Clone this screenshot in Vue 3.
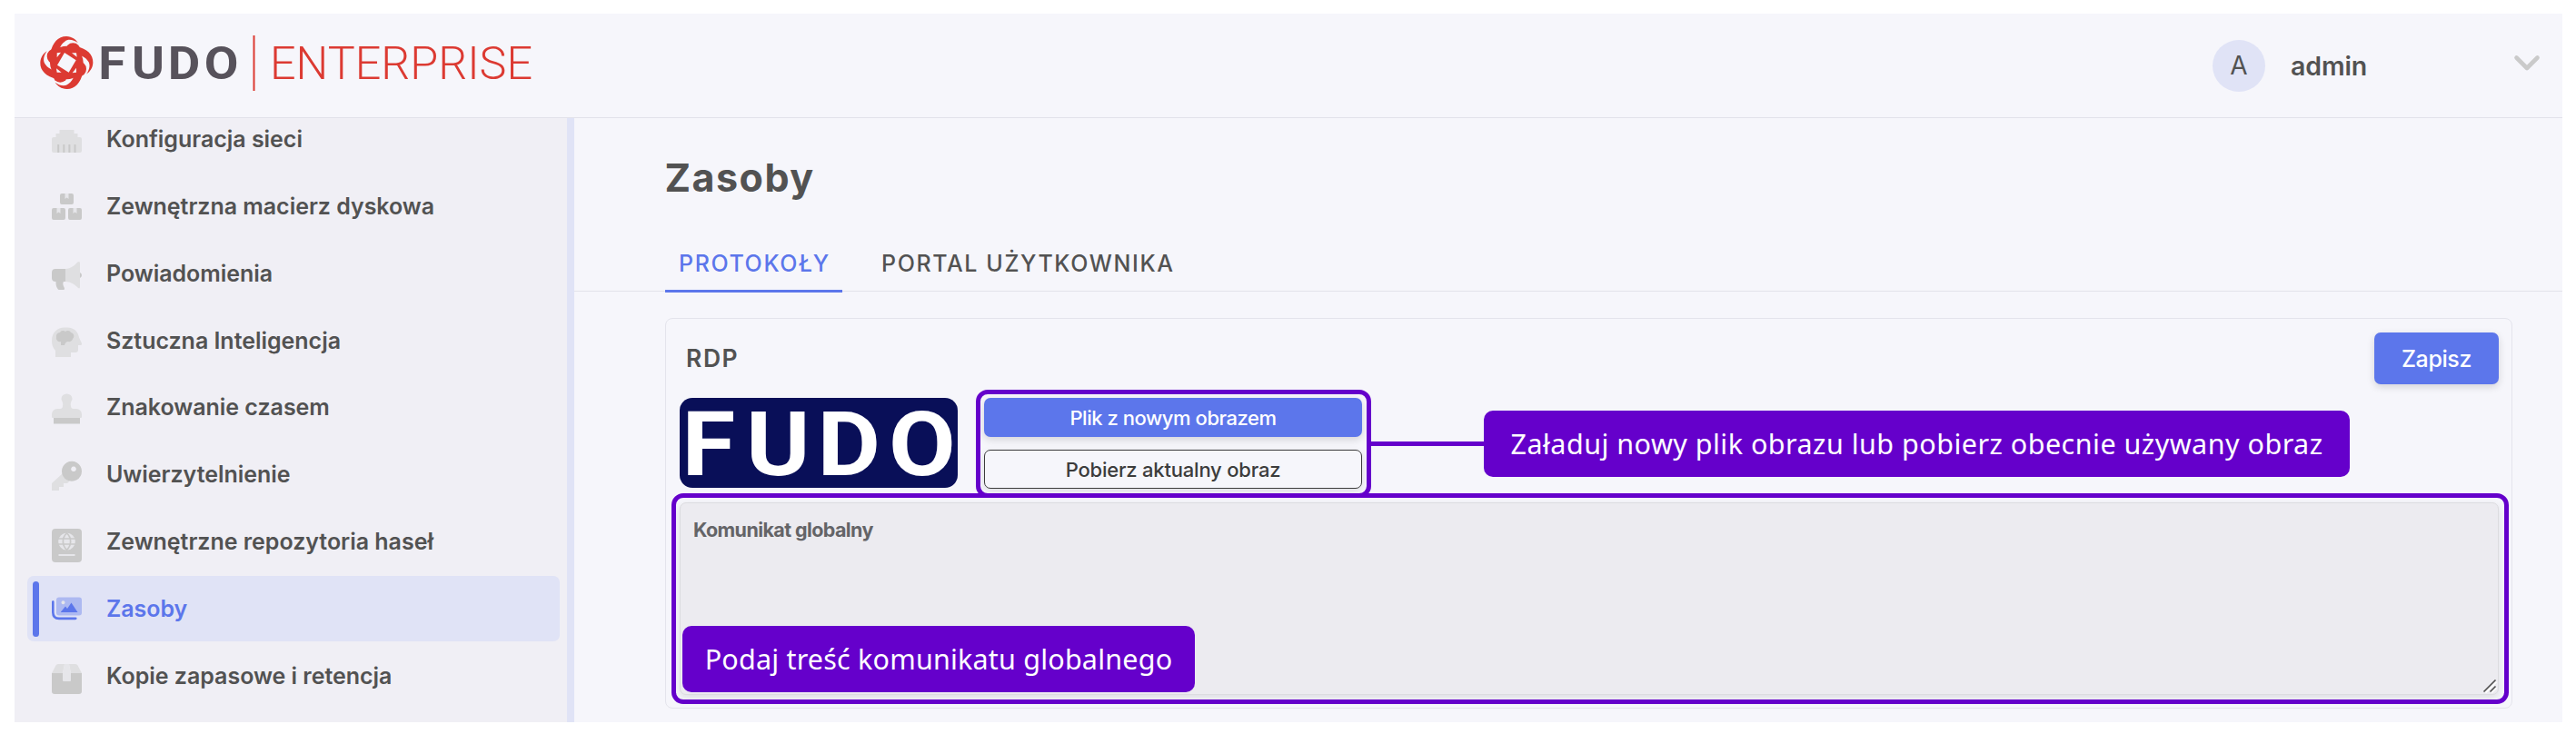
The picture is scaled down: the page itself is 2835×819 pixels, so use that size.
<template>
  <div class="page">
    <div class="app">
      <header class="topbar">
        <svg class="logo" width="545" height="64" viewBox="0 0 545 64">
          <g transform="translate(-15 -8) scale(.33333)" fill="#dc3a32">
            <circle cx="130" cy="117" r="55" />
            <g v-for="r in turns" :key="r" :transform="`rotate(${r} 130 117)`">
              <circle cx="151" cy="77" r="25" />
              <path d="M77 84C83 50 104 29 130 30C148 31 160 40 168 52C152 40 134 38 124 47C114 54 110 62 106 72Z" />
            </g>
            <g fill="#f6f6fb">
              <path d="M123 84L161 109L137 149L99 125Z" />
              <path v-for="r in turns" :key="r" :transform="`rotate(${r} 130 117)`" d="M98 85L111 83L98 100Z" />
            </g>
          </g>
          <text class="brand" x="58.500 92.600 129.400 166.500" y="49" transform="scale(1.08 1)">FUDO</text>
          <rect x="233.500" y="1" width="2" height="61" fill="#dc3a32" />
          <text class="edition" x="252" y="49" textLength="289" lengthAdjust="spacingAndGlyphs">ENTERPRISE</text>
        </svg>
        <div class="user">
          <span class="avatar">A</span>
          <span class="user-name">admin</span>
          <svg class="chevron" width="30" height="20" viewBox="0 0 30 20">
            <path d="M3.500 3.500L15 15L26.500 3.500" />
          </svg>
        </div>
      </header>

      <div class="body">
        <aside class="sidebar">
          <ul class="menu">
            <li v-for="item in items" :key="item.label" class="menu-item" :class="{ active: item.active }">
              <svg class="menu-icon" width="33" height="40" viewBox="0 0 33 40">
                <path v-for="(s, i) in item.shapes" :key="i" :class="s[0]" :d="s[1]" />
              </svg>
              <span>{{ item.label }}</span>
            </li>
          </ul>
        </aside>

        <main class="content">
          <h1 class="title">Zasoby</h1>
          <nav class="tabs">
            <a class="tab tab-active">PROTOKOŁY</a>
            <a class="tab">PORTAL UŻYTKOWNIKA</a>
          </nav>

          <section class="card">
            <div class="card-head">
              <h2>RDP</h2>
              <button class="save">Zapisz</button>
            </div>
            <div class="image-row">
              <svg class="preview" width="306" height="99" viewBox="0 0 306 99">
                <text class="preview-text" x="2.300 67.600 140.300 213" y="84.500" transform="scale(1.08 1)">FUDO</text>
              </svg>
              <div class="actions">
                <button class="upload">Plik z nowym obrazem</button>
                <button class="download">Pobierz aktualny obraz</button>
              </div>
            </div>
            <div class="message">
              <span>Komunikat globalny</span>
              <svg class="grip" width="16" height="16" viewBox="0 0 16 16">
                <path class="grip-light" d="M3.500 15.500L15.500 3.500M10 15.500L15.500 10" />
                <path class="grip-dark" d="M1.500 14.500L14.500 1.500M8.500 14.500L14.500 8.500" />
              </svg>
            </div>

            <!-- annotations over the form -->
            <div class="frame frame-buttons"></div>
            <div class="frame frame-message"></div>
            <div class="connector"></div>
            <div class="callout callout-image">Załaduj nowy plik obrazu lub pobierz obecnie używany obraz</div>
            <div class="callout callout-message">Podaj treść komunikatu globalnego</div>
          </section>
        </main>
      </div>
    </div>
  </div>
</template>

<script setup>
const turns = [0, 90, 180, 270];

// every icon is a list of [tone, path]
const items = [
  {
    label: 'Konfiguracja sieci',
    shapes: [
      ['soft', 'M0 16a2 2 0 0 1 2-2h2.500v-4h4V6h16v4h4v4H31a2 2 0 0 1 2 2v13a2 2 0 0 1-2 2H2a2 2 0 0 1-2-2Z'],
      ['tone', 'M6.200 22h2v9h-2ZM12.300 22h2v9h-2ZM18.400 22h2v9h-2ZM24.500 22h2v9h-2Z']
    ]
  },
  {
    label: 'Zewnętrzna macierz dyskowa',
    shapes: [
      ['tone', 'M11 2h11a2 2 0 0 1 2 2v8a2 2 0 0 1-2 2H11a2 2 0 0 1-2-2V4a2 2 0 0 1 2-2ZM2 18h11a2 2 0 0 1 2 2v9a2 2 0 0 1-2 2H2a2 2 0 0 1-2-2v-9a2 2 0 0 1 2-2ZM20 18h11a2 2 0 0 1 2 2v9a2 2 0 0 1-2 2H20a2 2 0 0 1-2-2v-9a2 2 0 0 1 2-2Z'],
      ['hint', 'M14.500 2h4v6l-2-1.500-2 1.500ZM5.500 18h4v6l-2-1.500-2 1.500ZM23.500 18h4v6l-2-1.500-2 1.500Z']
    ]
  },
  {
    label: 'Powiadomienia',
    shapes: [
      ['tone', 'M4 11h11v14h-2c-2 3 1 6 1 8q0 1-1 1H8q-1 0-1.500-1c-2-3-2-5-2-8H4a4 4 0 0 1-4-4v-6a4 4 0 0 1 4-4ZM31 15q2 1 2 3t-2 3Z'],
      ['soft', 'M15 11C21 11 25 7 28.500 3.500Q31 2 31 4.500V31q0 2.500-2.500.500C25 28 21 25 15 25Z']
    ]
  },
  {
    label: 'Sztuczna Inteligencja',
    shapes: [
      ['soft', 'M4 34V27C1 24 0 20 0 16C0 7 6 1.500 14 1.500h3c8 0 12 5 13 11L33 19q.5 2-1.500 2H29v5a3 3 0 0 1-3 3H21v5Z'],
      ['tone', 'M10 17a4 4 0 0 1-5-5 4 4 0 0 1 4-5 4 4 0 0 1 6-1 4 4 0 0 1 6 1 4 4 0 0 1 2 7 4 4 0 0 1-5 3q-3 0-4 4h-4Z']
    ]
  },
  {
    label: 'Znakowanie czasem',
    shapes: [
      ['soft', 'M12 15C13 11 10.500 9 10.500 7a6 5.500 0 0 1 12 0C22.500 9 20 11 21 15Q21 18 24 18h3a6 6 0 0 1 6 6v3q0 1-1 1H1q-1 0-1-1v-3a6 6 0 0 1 6-6h3q3 0 3-3Z'],
      ['tone', 'M2 28h29v6.500H2Z']
    ]
  },
  {
    label: 'Uwierzytelnienie',
    shapes: [
      ['soft', 'M0 26L12 15L20 23L17 26H13v4H8v4H0Z'],
      ['tone', 'M22 1.700a11 11 0 1 1-.01 0ZM24 7.500a2.800 2.800 0 1 0 .01 0Z']
    ]
  },
  {
    label: 'Zewnętrzne repozytoria haseł',
    shapes: [
      ['tone', 'M4 2h25a4 4 0 0 1 4 4v29a4 4 0 0 1-4 4H4a4 4 0 0 1-4-4V6a4 4 0 0 1 4-4Z'],
      ['hint', 'M16.500 6.800a9.300 9.300 0 1 1-.01 0Z'],
      ['globe', 'M7 13h19M7 19h19M16.500 6.800c-5.500 5-5.500 13.600 0 18.600c5.500-5 5.500-13.600 0-18.600Z'],
      ['hint', 'M7.500 30h18v2h-18Z']
    ]
  },
  {
    label: 'Zasoby',
    active: true,
    shapes: [
      ['soft', 'M8 3.500h22a3 3 0 0 1 3 3v14a3 3 0 0 1-3 3H8a3 3 0 0 1-3-3v-14a3 3 0 0 1 3-3Z'],
      ['hint', 'M12.500 7.200a2 2 0 1 1-.01 0Z'],
      ['tone', 'M10 19.500L15 13.500L17 16L21.500 9.500L28.500 20H10ZM1.300 7q1.300 0 1.300 1.500V20q0 5.500 5.500 5.500h18q1.500 0 1.500 1.300T26 28.200H8Q0 28.200 0 20V8.500Q0 7 1.300 7Z']
    ]
  },
  {
    label: 'Kopie zapasowe i retencja',
    shapes: [
      ['tone', 'M0 13h33v20a3 3 0 0 1-3 3H3a3 3 0 0 1-3-3Z'],
      ['soft', 'M0 13L4.500 4.500Q5 3 7 3h7l-2 10ZM33 13L28.500 4.500Q28 3 26 3h-7l2 10Z'],
      ['hint', 'M14 3h5l2 10v8q0 1-1 1h-7q-1 0-1-1v-8Z']
    ]
  }
];
</script>

<style>
body {
  margin: 0;
  background: #fff;
}
</style>

<style scoped>
.page {
  box-sizing: border-box;
  width: 2835px;
  height: 819px;
  padding: 15px 15px 24px 16px;
  font-family: Inter, "Liberation Sans", sans-serif;
  color: #525252;
}

.app {
  display: flex;
  flex-direction: column;
  height: 780px;
  overflow: hidden;
  background: #f6f6fb;
}

.topbar {
  box-sizing: border-box;
  display: flex;
  justify-content: space-between;
  align-items: flex-start;
  height: 115px;
  padding: 23px 24px 0 29px;
  border-bottom: 1px solid #e2e2ea;
}

.logo,
.preview {
  overflow: visible;
  font-family: Roboto, "Liberation Sans", sans-serif;
}

.brand {
  font-size: 50.6px;
  font-weight: 700;
  fill: #57525b;
}

.edition {
  font-size: 50.6px;
  font-weight: 300;
  fill: #dc3a32;
}

.user {
  display: flex;
  align-items: center;
  margin-top: 6px;
}

.avatar {
  width: 58px;
  height: 57px;
  border-radius: 50%;
  background: #e0e3f6;
  font-size: 28px;
  line-height: 57px;
  text-align: center;
}

.user-name {
  width: 245px;
  margin-left: 28px;
  font-size: 28.5px;
  font-weight: 600;
  letter-spacing: -0.1px;
}

.chevron {
  margin-top: -6px;
  fill: none;
  stroke: #cacaca;
  stroke-width: 4.6;
  stroke-linecap: round;
  stroke-linejoin: round;
}

.body {
  display: flex;
  height: 665px;
}

.sidebar {
  box-sizing: border-box;
  width: 616px;
  overflow: hidden;
  background: #f0eff5;
  border-right: 8px solid #e0e3f6;
}

.menu {
  display: flex;
  flex-direction: column;
  gap: 1.86px;
  margin: -13px 8px 0 14px;
  padding: 0;
  list-style: none;
}

.menu-item {
  display: flex;
  align-items: center;
  flex: none;
  gap: 27px;
  height: 72px;
  padding-left: 27px;
  border-radius: 7px;
  font-size: 25px;
  font-weight: 600;
  letter-spacing: -0.03px;
}

.menu-item.active {
  background: #e0e3f6;
  color: #5c76eb;
}

.menu-item.active::before {
  content: "";
  width: 7px;
  height: 61px;
  margin: 0 -13px 0 -21px;
  border-radius: 4px;
  background: #5c76eb;
}

.menu-icon {
  margin-top: 8px;
}

.tone {
  fill: #c9c9c9;
  fill-rule: evenodd;
}

.soft {
  fill: #dfdfe1;
}

.hint {
  fill: #e6e6ea;
}

.globe {
  fill: none;
  stroke: #c9c9c9;
  stroke-width: 1.7;
}

.active .tone {
  fill: #5c76eb;
}

.active .soft {
  fill: #adb9f1;
}

.content {
  flex: 1;
  min-width: 0;
}

.title {
  margin: 39px 0 0 99.5px;
  font-size: 43px;
  font-weight: 700;
  line-height: 52px;
  letter-spacing: 1.5px;
}

.tabs {
  box-sizing: border-box;
  display: flex;
  align-items: flex-start;
  gap: 28px;
  height: 46px;
  margin-top: 54px;
  padding-left: 100px;
  border-bottom: 1px solid #e2e2ea;
}

.tab {
  box-sizing: border-box;
  height: 47px;
  padding: 0 15px;
  font-size: 25px;
  font-weight: 500;
  line-height: 30px;
  letter-spacing: 1.6px;
  white-space: nowrap;
}

.tab-active {
  width: 195px;
  border-bottom: 3px solid #5c76eb;
  color: #5c76eb;
}

.card {
  position: relative;
  box-sizing: border-box;
  height: 430px;
  margin: 29px 55px 0 100px;
  padding: 15px 14px 0 15px;
  border: 1px solid #e4e4ec;
  border-radius: 8px;
}

.card-head {
  display: flex;
  justify-content: space-between;
  height: 57px;
}

h2 {
  margin: 12px 0 0 7px;
  font-size: 26.5px;
  font-weight: 600;
  line-height: 32px;
  letter-spacing: 1.6px;
}

button {
  box-sizing: border-box;
  padding: 0;
  border: 0;
  border-radius: 7px;
  font-family: inherit;
  white-space: nowrap;
}

.save {
  width: 137px;
  height: 57px;
  background: #5c76eb;
  box-shadow: 0 3px 8px rgba(0, 0, 0, 0.14);
  color: #fff;
  font-size: 25px;
  font-weight: 500;
  letter-spacing: -0.4px;
}

.image-row {
  display: flex;
  gap: 29px;
  margin-top: 15px;
}

.preview {
  border-radius: 14px;
  background: #090f58;
}

.preview-text {
  font-size: 99px;
  font-weight: 700;
  fill: #fff;
}

.actions {
  display: flex;
  flex-direction: column;
  gap: 14px;
  width: 416px;
}

.actions button {
  height: 43px;
  font-size: 22px;
  font-weight: 500;
  letter-spacing: -0.2px;
}

.actions .upload {
  background: #5c76eb;
  box-shadow: 0 3px 8px rgba(0, 0, 0, 0.14);
  color: #fff;
  letter-spacing: -0.45px;
}

.actions .download {
  border: 1px solid #3c3c3c;
  background: #f6f6fb;
  box-shadow: 0 3px 8px rgba(0, 0, 0, 0.1);
  color: #3c3c3c;
}

.message {
  position: relative;
  box-sizing: border-box;
  height: 212px;
  margin-top: 15px;
  padding: 16px 14px;
  border: 1px solid #dcdce0;
  border-radius: 7px;
  background: #ecebf0;
  box-shadow: 0 3px 8px rgba(0, 0, 0, 0.1);
  color: #646467;
  font-size: 21.5px;
  font-weight: 700;
  line-height: 26px;
  letter-spacing: -0.6px;
}

.grip {
  position: absolute;
  right: 1px;
  bottom: 1px;
  fill: none;
  stroke-width: 1.6;
}

.grip-light {
  stroke: #fff;
}

.grip-dark {
  stroke: #505050;
}

.frame {
  position: absolute;
  box-sizing: border-box;
  border: 5px solid #6500cb;
  border-radius: 13px;
}

.frame-buttons {
  left: 341px;
  top: 78px;
  width: 435px;
  height: 119px;
}

.frame-message {
  left: 6px;
  top: 192px;
  width: 2022px;
  height: 232px;
}

.connector {
  position: absolute;
  left: 774px;
  top: 135px;
  width: 128px;
  height: 5px;
  background: #6500cb;
}

.callout {
  position: absolute;
  border-radius: 10px;
  background: #6500cb;
  color: #fff;
  font-family: "Noto Sans", "Open Sans", sans-serif;
  font-size: 30.5px;
  line-height: 72px;
  text-align: center;
  white-space: nowrap;
}

.callout-image {
  left: 900px;
  top: 101px;
  width: 953px;
  height: 73px;
  letter-spacing: 0.48px;
}

.callout-message {
  left: 18px;
  top: 338px;
  width: 564px;
  height: 73px;
  letter-spacing: 0.2px;
}
</style>
